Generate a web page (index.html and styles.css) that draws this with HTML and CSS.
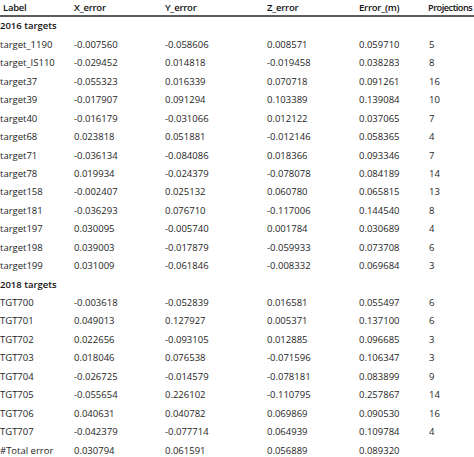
FILE: index.html
```html
<!DOCTYPE html>
<html>
<head>
<meta charset="utf-8">
<link rel="stylesheet" href="styles.css">
</head>
<body>
<div class="table">
  <div class="row head">
    <div class="c label-h">Label</div><div class="c">X_error</div><div class="c">Y_error</div><div class="c">Z_error</div><div class="c">Error_(m)</div><div class="c proj">Projections</div>
  </div>
  <div class="row section"><div class="c">2016 targets</div></div>
  <div class="row"><div class="c">target_1190</div><div class="c">-0.007560</div><div class="c">-0.058606</div><div class="c">0.008571</div><div class="c">0.059710</div><div class="c">5</div></div>
  <div class="row"><div class="c">target_IS110</div><div class="c">-0.029452</div><div class="c">0.014818</div><div class="c">-0.019458</div><div class="c">0.038283</div><div class="c">8</div></div>
  <div class="row"><div class="c">target37</div><div class="c">-0.055323</div><div class="c">0.016339</div><div class="c">0.070718</div><div class="c">0.091261</div><div class="c">16</div></div>
  <div class="row"><div class="c">target39</div><div class="c">-0.017907</div><div class="c">0.091294</div><div class="c">0.103389</div><div class="c">0.139084</div><div class="c">10</div></div>
  <div class="row"><div class="c">target40</div><div class="c">-0.016179</div><div class="c">-0.031066</div><div class="c">0.012122</div><div class="c">0.037065</div><div class="c">7</div></div>
  <div class="row"><div class="c">target68</div><div class="c">0.023818</div><div class="c">0.051881</div><div class="c">-0.012146</div><div class="c">0.058365</div><div class="c">4</div></div>
  <div class="row"><div class="c">target71</div><div class="c">-0.036134</div><div class="c">-0.084086</div><div class="c">0.018366</div><div class="c">0.093346</div><div class="c">7</div></div>
  <div class="row"><div class="c">target78</div><div class="c">0.019934</div><div class="c">-0.024379</div><div class="c">-0.078078</div><div class="c">0.084189</div><div class="c">14</div></div>
  <div class="row"><div class="c">target158</div><div class="c">-0.002407</div><div class="c">0.025132</div><div class="c">0.060780</div><div class="c">0.065815</div><div class="c">13</div></div>
  <div class="row"><div class="c">target181</div><div class="c">-0.036293</div><div class="c">0.076710</div><div class="c">-0.117006</div><div class="c">0.144540</div><div class="c">8</div></div>
  <div class="row"><div class="c">target197</div><div class="c">0.030095</div><div class="c">-0.005740</div><div class="c">0.001784</div><div class="c">0.030689</div><div class="c">4</div></div>
  <div class="row"><div class="c">target198</div><div class="c">0.039003</div><div class="c">-0.017879</div><div class="c">-0.059933</div><div class="c">0.073708</div><div class="c">6</div></div>
  <div class="row"><div class="c">target199</div><div class="c">0.031009</div><div class="c">-0.061846</div><div class="c">-0.008332</div><div class="c">0.069684</div><div class="c">3</div></div>
  <div class="row section"><div class="c">2018 targets</div></div>
  <div class="row"><div class="c">TGT700</div><div class="c">-0.003618</div><div class="c">-0.052839</div><div class="c">0.016581</div><div class="c">0.055497</div><div class="c">6</div></div>
  <div class="row"><div class="c">TGT701</div><div class="c">0.049013</div><div class="c">0.127927</div><div class="c">0.005371</div><div class="c">0.137100</div><div class="c">6</div></div>
  <div class="row"><div class="c">TGT702</div><div class="c">0.022656</div><div class="c">-0.093105</div><div class="c">0.012885</div><div class="c">0.096685</div><div class="c">3</div></div>
  <div class="row"><div class="c">TGT703</div><div class="c">0.018046</div><div class="c">0.076538</div><div class="c">-0.071596</div><div class="c">0.106347</div><div class="c">3</div></div>
  <div class="row"><div class="c">TGT704</div><div class="c">-0.026725</div><div class="c">-0.014579</div><div class="c">-0.078181</div><div class="c">0.083899</div><div class="c">9</div></div>
  <div class="row"><div class="c">TGT705</div><div class="c">-0.055654</div><div class="c">0.226102</div><div class="c">-0.110795</div><div class="c">0.257867</div><div class="c">14</div></div>
  <div class="row"><div class="c">TGT706</div><div class="c">0.040631</div><div class="c">0.040782</div><div class="c">0.069869</div><div class="c">0.090530</div><div class="c">16</div></div>
  <div class="row"><div class="c">TGT707</div><div class="c">-0.042379</div><div class="c">-0.077714</div><div class="c">0.064939</div><div class="c">0.109784</div><div class="c">4</div></div>
  <div class="row"><div class="c">#Total error</div><div class="c">0.030794</div><div class="c">0.061591</div><div class="c">0.056889</div><div class="c">0.089320</div><div class="c"></div></div>
</div>
</body>
</html>
```
FILE: styles.css
```css
html, body {
  margin: 0;
  padding: 0;
  background: #ffffff;
  overflow: hidden;
}
body {
  font-family: "Open Sans", "Noto Sans", sans-serif;
  font-size: 9.5px;
  color: #1e1e1e;
}
.table {
  width: 474px;
}
.row {
  display: grid;
  grid-template-columns: 74px 91px 102px 92px 70px 1fr;
  height: 18.45px;
  align-items: center;
  white-space: nowrap;
}
.head {
  height: 15px;
  font-weight: 600;
  letter-spacing: -0.25px;
  border-bottom: 2px solid #5c5c5c;
  color: #111;
}
.head .proj {
  margin-left: -1px;
  letter-spacing: -0.5px;
  font-size: 9.2px;
}
.label-h {
  padding-left: 3px;
}
.section {
  font-weight: 600;
  color: #111;
}
.section .c {
  grid-column: 1 / 3;
}
.c {
  line-height: 1;
}
```
